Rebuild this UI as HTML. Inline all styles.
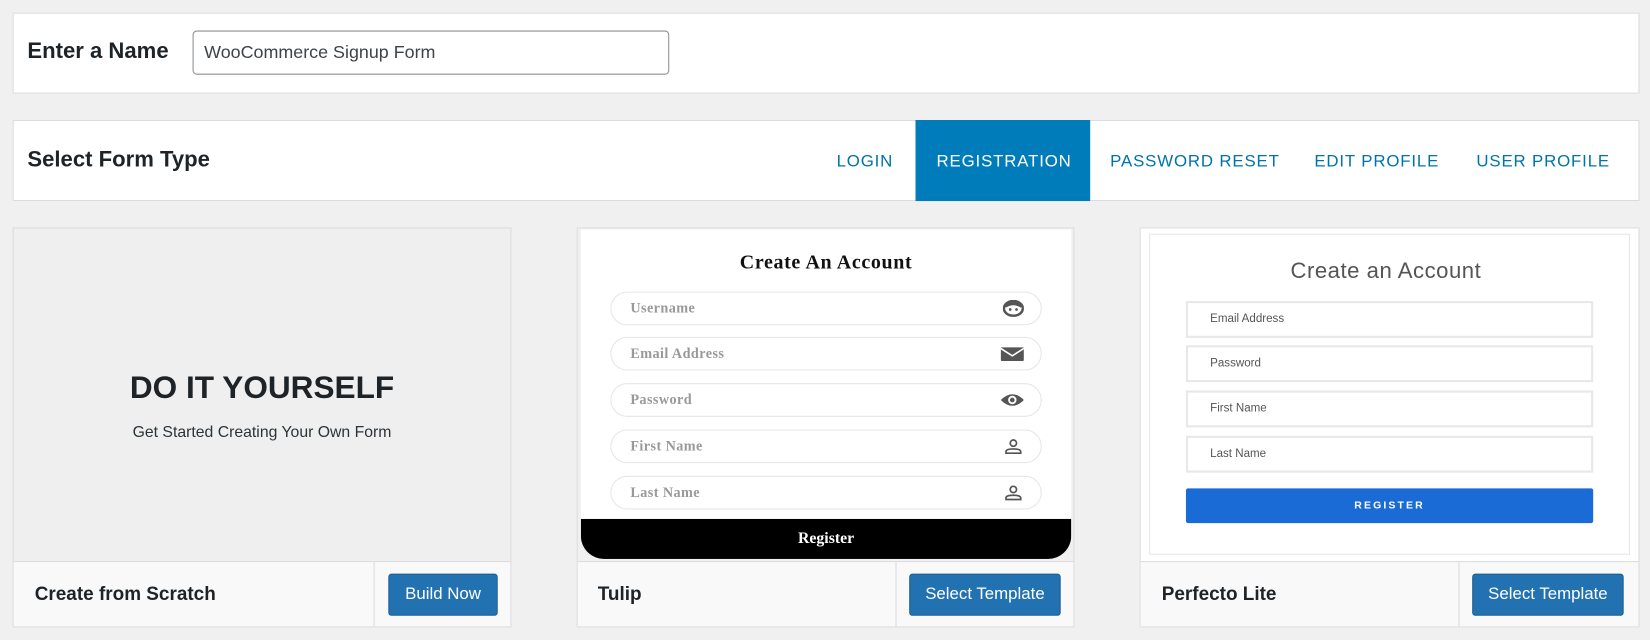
<!DOCTYPE html>
<html><head><style>
*{box-sizing:border-box;margin:0;padding:0}
body{width:1650px;height:640px;background:#f0f0f1;font-family:"Liberation Sans",sans-serif;overflow:hidden;color:#1d2327}
#w{position:relative;width:1568px;height:608px;transform:scale(1.05230,1.05263);transform-origin:0 0}
.abs{position:absolute}
.box{position:absolute;background:#fff;border:1px solid #dcdcde}
.tab{position:absolute;top:145px;font-size:16px;letter-spacing:.8px;color:#0073aa}
.btn{position:absolute;background:#2271b1;color:#fff;border-radius:3px;font-size:16px;display:flex;align-items:center;justify-content:center;border:1px solid #1d5f96}
.foot{position:absolute;background:#f9f9f9;border-top:1px solid #dcdcde;height:62px}
.tf{position:absolute;left:580px;width:410px;height:32px;border:1.5px solid #e6e6e6;border-radius:16px;font-family:"Liberation Serif",serif;font-weight:bold;color:#999;font-size:13.5px;padding-left:18px;line-height:29px;letter-spacing:.4px}
.tf svg{position:absolute;right:16px;top:7px}
.pf{position:absolute;left:1127px;width:387px;height:35px;border:2px solid #e8e8e8;font-size:11px;color:#555;padding-left:21px;line-height:31px}
</style></head><body><div id="w">
<div class="box" style="left:12px;top:12px;width:1546px;height:77px"></div>
<div class="abs" style="left:26px;top:37px;font-size:21px;font-weight:bold">Enter a Name</div>
<div class="abs" style="left:183px;top:29px;width:453px;height:42px;border:1px solid #8c8f94;border-radius:4px;background:#fff;font-size:17px;color:#3c434a;padding-left:10px;line-height:40px">WooCommerce Signup Form</div>

<div class="box" style="left:12px;top:114px;width:1546px;height:77px"></div>
<div class="abs" style="left:26px;top:140px;font-size:21px;font-weight:bold">Select Form Type</div>
<div class="abs" style="left:870px;top:114px;width:166px;height:77px;background:#007cba"></div>
<div class="tab" style="left:795px">LOGIN</div>
<div class="tab" style="left:890px;color:#fff">REGISTRATION</div>
<div class="tab" style="left:1055px">PASSWORD RESET</div>
<div class="tab" style="left:1249px">EDIT PROFILE</div>
<div class="tab" style="left:1403px">USER PROFILE</div>

<div class="box" style="left:12px;top:216px;width:474px;height:380px;background:#efefef"></div>
<div class="abs" style="left:12px;top:352px;width:474px;text-align:center;font-size:30px;font-weight:bold;color:#1d2327">DO IT YOURSELF</div>
<div class="abs" style="left:12px;top:402px;width:474px;text-align:center;font-size:15px;color:#2c3338">Get Started Creating Your Own Form</div>
<div class="foot" style="left:13px;top:533px;width:472px"></div>
<div class="abs" style="left:355px;top:534px;width:1px;height:61px;background:#dcdcde"></div>
<div class="abs" style="left:33px;top:554px;font-size:18px;font-weight:bold">Create from Scratch</div>
<div class="btn" style="left:369px;top:545px;width:104px;height:40px">Build Now</div>

<div class="box" style="left:548px;top:216px;width:473px;height:380px;background:#f0f0f1"></div>
<div class="abs" style="left:552px;top:218px;width:466px;height:313px;background:#fff;border-radius:0 0 22px 22px;overflow:hidden">
<div class="abs" style="left:0;top:275px;width:466px;height:38px;background:#000;color:#fff;font-family:'Liberation Serif',serif;font-weight:bold;font-size:15px;text-align:center;line-height:38px">Register</div>
</div>
<div class="abs" style="left:552px;top:239px;width:466px;text-align:center;font-family:'Liberation Serif',serif;font-weight:bold;font-size:19px;letter-spacing:.6px;color:#111">Create An Account</div>
<div class="tf" style="top:277px">Username<svg width="20" height="16" viewBox="0 0 20 16"><ellipse cx="10" cy="8" rx="9" ry="7" fill="none" stroke="#555" stroke-width="2.4"/><path d="M2 6 Q10 1 18 6" stroke="#555" stroke-width="3" fill="none"/><circle cx="7" cy="9" r="1.3" fill="#555"/><circle cx="13" cy="9" r="1.3" fill="#555"/></svg></div>
<div class="tf" style="top:320px">Email Address<svg width="22" height="16" viewBox="0 0 22 16"><rect x="0" y="2" width="22" height="13" rx="1" fill="#555"/><path d="M0 3 L11 10 L22 3" stroke="#fff" stroke-width="1.5" fill="none"/></svg></div>
<div class="tf" style="top:364px">Password<svg width="22" height="16" viewBox="0 0 22 16"><path d="M0 8 Q11 -3 22 8 Q11 19 0 8Z" fill="#555"/><circle cx="11" cy="8" r="4" fill="#fff"/><circle cx="11" cy="8" r="2.2" fill="#555"/></svg></div>
<div class="tf" style="top:408px">First Name<svg width="20" height="16" viewBox="0 0 20 16"><circle cx="10" cy="5" r="3" fill="none" stroke="#555" stroke-width="1.6"/><path d="M3 14.5 V13 Q3 10.5 10 10.5 Q17 10.5 17 13 V14.5Z" fill="none" stroke="#555" stroke-width="1.6"/></svg></div>
<div class="tf" style="top:452px">Last Name<svg width="20" height="16" viewBox="0 0 20 16"><circle cx="10" cy="5" r="3" fill="none" stroke="#555" stroke-width="1.6"/><path d="M3 14.5 V13 Q3 10.5 10 10.5 Q17 10.5 17 13 V14.5Z" fill="none" stroke="#555" stroke-width="1.6"/></svg></div>
<div class="foot" style="left:549px;top:533px;width:471px"></div>
<div class="abs" style="left:851px;top:534px;width:1px;height:61px;background:#dcdcde"></div>
<div class="abs" style="left:568px;top:554px;font-size:18px;font-weight:bold">Tulip</div>
<div class="btn" style="left:864px;top:545px;width:144px;height:40px">Select Template</div>

<div class="box" style="left:1083px;top:216px;width:475px;height:380px"></div>
<div class="abs" style="left:1092px;top:222px;width:457px;height:305px;border:1px solid #e6e6e6"></div>
<div class="abs" style="left:1092px;top:246px;width:450px;text-align:center;font-size:21px;color:#555;letter-spacing:.5px">Create an Account</div>
<div class="pf" style="top:286px">Email Address</div>
<div class="pf" style="top:328px">Password</div>
<div class="pf" style="top:371px">First Name</div>
<div class="pf" style="top:414px">Last Name</div>
<div class="abs" style="left:1127px;top:464px;width:387px;height:33px;background:#1a6bd6;color:#fff;font-size:10px;font-weight:bold;letter-spacing:2px;text-align:center;line-height:33px;border-radius:2px">REGISTER</div>
<div class="foot" style="left:1084px;top:533px;width:473px"></div>
<div class="abs" style="left:1386px;top:534px;width:1px;height:61px;background:#dcdcde"></div>
<div class="abs" style="left:1104px;top:554px;font-size:18px;font-weight:bold">Perfecto Lite</div>
<div class="btn" style="left:1399px;top:545px;width:144px;height:40px">Select Template</div>
</div></body></html>
